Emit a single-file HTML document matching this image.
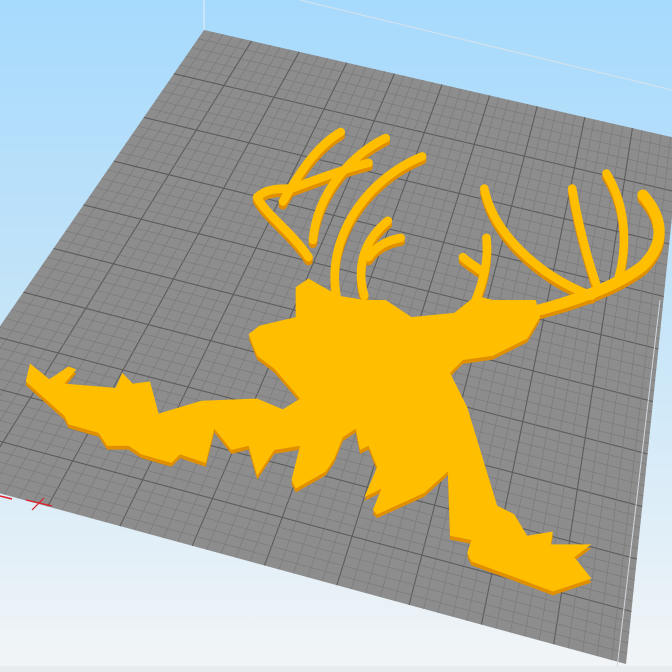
<!DOCTYPE html>
<html><head><meta charset="utf-8"><style>
html,body{margin:0;padding:0;width:672px;height:672px;overflow:hidden}
svg{display:block}
</style></head><body>
<svg id="s" width="672" height="672" viewBox="0 0 672 672" xmlns="http://www.w3.org/2000/svg">
<defs>
<linearGradient id="bg" x1="0" y1="0" x2="0" y2="1">
<stop offset="0" stop-color="#a6dafd"/>
<stop offset="0.45" stop-color="#c4e4f8"/>
<stop offset="1" stop-color="#f2f5f7"/>
</linearGradient>
<symbol id="deer" overflow="visible">
  <path stroke="none" d="M690,670 L720,650 L790,690 L850,700 L900,700 L960,740 L1060,730 L1110,690 L1150,700 L1250,700 L1260,740 L1230,790 L1150,830 L1080,840 L1050,870 L1090,950 L1160,1180 L1200,1200 L1230,1250 L1290,1240 L1285,1270 L1380,1270 L1340,1300 L1380,1350 L1290,1380 L1210,1350 L1100,1310 L1090,1290 L1100,1260 L1050,1250 L1045,1100 L990,1150 L880,1200 L870,1190 L890,1140 L850,1160 L880,1090 L860,1040 L840,1050 L830,1000 L800,1020 L780,1070 L760,1100 L690,1140 L680,1120 L700,1040 L640,1050 L600,1110 L580,1040 L540,1050 L500,1000 L480,1080 L420,1060 L400,1080 L330,1060 L300,1040 L250,1040 L230,1010 L160,990 L150,970 L60,890 L70,848 L115,885 L160,855 L178,862 L150,895 L270,905 L285,870 L310,895 L350,890 L370,965 L470,935 L600,930 L660,955 L700,930 L640,860 L600,830 L580,780 L605,760 L690,740 Z"/>
  <g fill="none" stroke-width="20" stroke-linecap="round" stroke-linejoin="round">
   <path d="M785,690 C760,560 850,420 985,365"/>
   <path d="M730,560 C740,450 820,360 900,322"/>
   <path d="M720,600 C680,540 620,500 600,460"/>
   <path d="M660,470 C700,400 740,340 795,308"/>
   <path d="M680,440 C760,410 820,390 860,380"/>
   <path d="M600,460 C620,440 650,440 680,440"/>
   <path d="M850,690 C830,620 850,560 905,515"/>
   <path d="M860,600 C880,570 910,560 935,555"/>
   <path stroke-width="26" d="M1000,780 C1200,740 1400,700 1500,620 C1560,560 1540,500 1500,455"/>
   <path d="M1380,690 C1250,640 1150,540 1130,440"/>
   <path d="M1390,660 C1360,570 1345,500 1335,440"/>
   <path d="M1440,660 C1470,560 1455,470 1415,405"/>
   <path d="M1110,700 C1130,650 1140,600 1135,555"/>
   <path d="M1120,630 C1100,615 1090,610 1080,600"/>
  </g>
</symbol>
</defs>
<rect width="672" height="672" fill="url(#bg)"/>
<line x1="204" y1="0" x2="204" y2="30" stroke="#e8eef2" stroke-width="1"/>
<line x1="300" y1="0" x2="672" y2="90" stroke="#d8e2ea" stroke-width="1"/>
<polygon points="204,30 680,139 626,664 -97,467" fill="#8d8d8d"/>
<g id="grid"></g>
<line x1="660" y1="300" x2="617" y2="668" stroke="#d0d6dc" stroke-width="1"/>
<line x1="0" y1="496" x2="12" y2="499" stroke="#e0202a" stroke-width="1.5"/>
<line x1="26" y1="500" x2="52" y2="506" stroke="#e0202a" stroke-width="1.2"/>
<line x1="32" y1="510" x2="44" y2="498" stroke="#e0202a" stroke-width="1.2"/>
<rect x="0" y="666" width="672" height="6" fill="#e9ecee"/>
<g transform="scale(0.4286)">
 <use href="#deer" x="0" y="9" fill="#e08f00" stroke="#e08f00"/>
 <use href="#deer" fill="#ffbe00" stroke="#ffbe00"/>
</g>
</svg>
<script>
(function(){
var TL=[204,30],TR=[680,139],BR=[626,664],BL=[-97,467];
function P(u,v){var a=[TL[0]+(TR[0]-TL[0])*u,TL[1]+(TR[1]-TL[1])*u];var b=[BL[0]+(BR[0]-BL[0])*u,BL[1]+(BR[1]-BL[1])*u];return [a[0]+(b[0]-a[0])*v,a[1]+(b[1]-a[1])*v];}
var g=document.getElementById('grid'),h='',n=50;
for(var i=1;i<n;i++){var t=i/n,maj=(i%5==0);var c=maj?'#5c5c5c':'#7a7a7a',w=maj?1.1:0.7;
var p=P(t,0),q=P(t,1);h+='<line x1="'+p[0]+'" y1="'+p[1]+'" x2="'+q[0]+'" y2="'+q[1]+'" stroke="'+c+'" stroke-width="'+w+'"/>';
p=P(0,t);q=P(1,t);h+='<line x1="'+p[0]+'" y1="'+p[1]+'" x2="'+q[0]+'" y2="'+q[1]+'" stroke="'+c+'" stroke-width="'+w+'"/>';}
g.innerHTML=h;
})();
</script>
</body></html>
